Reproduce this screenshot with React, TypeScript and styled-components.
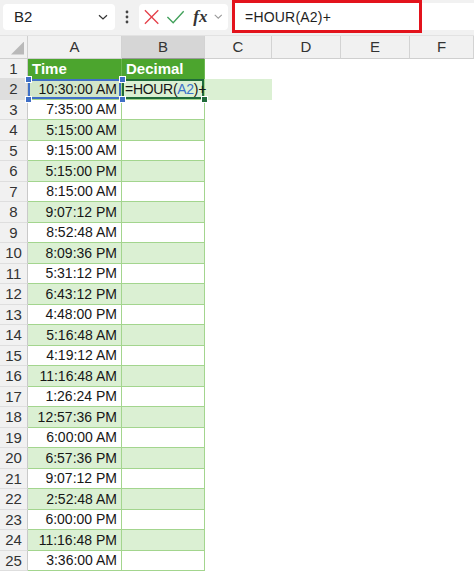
import React from 'react';
import styled, { createGlobalStyle } from 'styled-components';

const GlobalStyle = createGlobalStyle`
  html, body {
    margin: 0;
    padding: 0;
    background: #fff;
  }
  body {
    font-family: 'Liberation Sans', Arial, sans-serif;
    color: #222;
  }
`;

const times = [
  '10:30:00 AM', '7:35:00 AM', '5:15:00 AM', '9:15:00 AM', '5:15:00 PM',
  '8:15:00 AM', '9:07:12 PM', '8:52:48 AM', '8:09:36 PM', '5:31:12 PM',
  '6:43:12 PM', '4:48:00 PM', '5:16:48 AM', '4:19:12 AM', '11:16:48 AM',
  '1:26:24 PM', '12:57:36 PM', '6:00:00 AM', '6:57:36 PM', '9:07:12 PM',
  '2:52:48 AM', '6:00:00 PM', '11:16:48 PM', '3:36:00 AM',
];

const columns = ['A', 'B', 'C', 'D', 'E', 'F'];

const GREEN = '#4ca52e';
const BAND = '#dbf0d3';
const LINE = '#a3d58e';

const Page = styled.div`
  width: 474px;
  height: 572px;
  overflow: hidden;
  background: #fff;
`;

const FormulaBar = styled.div`
  display: flex;
  align-items: center;
  height: 36px;
  padding: 0 0 2px 3px;
  box-sizing: border-box;
  background: #f1f1f1;
  border-bottom: 1px solid #e2e2e2;
`;

const NameBox = styled.div`
  width: 112px;
  height: 26px;
  box-sizing: border-box;
  display: flex;
  align-items: center;
  justify-content: space-between;
  padding: 0 6px 0 11px;
  background: #fff;
  border-radius: 4px;
  font-size: 15px;
  color: #222;
`;

const DotsSlot = styled.div`
  width: 24px;
  display: flex;
  justify-content: center;
`;

const ActionBox = styled.div`
  width: 89px;
  height: 26px;
  box-sizing: border-box;
  display: flex;
  align-items: center;
  gap: 6px;
  padding: 0 4px 0 4px;
  background: #fff;
  border-radius: 4px;
`;

const Fx = styled.span`
  font-family: 'Liberation Serif', 'Times New Roman', serif;
  font-style: italic;
  font-weight: bold;
  font-size: 17px;
  color: #333;
  margin-left: 2px;
`;

const FormulaField = styled.div`
  position: relative;
  flex: 1;
  height: 27px;
  margin-left: 4px;
  display: flex;
  align-items: center;
  padding-left: 13px;
  background: #fff;
  font-size: 14px;
  letter-spacing: 0.2px;
  color: #1e1e1e;
`;

const Highlight = styled.div`
  position: absolute;
  left: 0;
  top: -3px;
  width: 190px;
  height: 33px;
  box-sizing: border-box;
  border: 3px solid #e3131c;
`;

const Sheet = styled.div`
  display: grid;
  grid-template-columns: 28px 94px 83px 67px 69px 69px 64px;
  grid-template-rows: 22.5px;
  grid-auto-rows: 20.5px;
`;

const Corner = styled.div`
  display: flex;
  align-items: flex-end;
  justify-content: flex-end;
  padding: 0 3px 3px 0;
  background: #f1f1f1;
  border-right: 1px solid #cfcfcf;
  border-bottom: 1px solid #cfcfcf;
`;

const Triangle = styled.div`
  width: 13px;
  height: 13px;
  background: #b9b9b9;
  clip-path: polygon(100% 0, 100% 100%, 0 100%);
`;

const ColHeader = styled.div<{ $selected?: boolean }>`
  display: flex;
  align-items: center;
  justify-content: center;
  font-size: 15px;
  color: #333;
  background: ${(p) => (p.$selected ? '#d6d6d6' : '#f1f1f1')};
  border-right: 1px solid #d3d3d3;
  border-bottom: 1px solid ${(p) => (p.$selected ? '#9c9c9c' : '#cfcfcf')};
`;

const RowHeader = styled.div<{ $selected?: boolean }>`
  display: flex;
  align-items: center;
  justify-content: center;
  font-size: 15px;
  color: #333;
  background: ${(p) => (p.$selected ? '#dedede' : '#f1f1f1')};
  border-right: 1px solid #c9c9c9;
  border-bottom: 1px solid #dedede;
`;

const HeadCell = styled.div`
  display: flex;
  align-items: center;
  padding-left: 4px;
  background: ${GREEN};
  color: #fff;
  font-weight: bold;
  font-size: 15px;
  border-right: 1px solid #6cb851;
`;

const Cell = styled.div<{ $shade?: boolean; $align?: 'left' | 'right' }>`
  position: relative;
  display: flex;
  align-items: center;
  justify-content: ${(p) => (p.$align === 'right' ? 'flex-end' : 'flex-start')};
  padding: 0 4px;
  font-size: 14px;
  color: #161616;
  white-space: nowrap;
  background: ${(p) => (p.$shade ? BAND : '#fff')};
  border-right: 1px solid ${LINE};
  border-bottom: 1px solid ${LINE};
`;

const RefCell = styled(Cell)`
  background: #d2e6ca;
  box-shadow: inset 0 0 0 2px #3f6fc6;
`;

const ActiveCell = styled(Cell)`
  overflow: visible;
  padding-left: 3px;
  letter-spacing: -0.3px;
  box-shadow: inset 0 0 0 2px #1f6b3a;
`;

const Blank = styled.div<{ $shade?: boolean }>`
  background: ${(p) => (p.$shade ? BAND : '#fff')};
`;

const Handle = styled.span<{ $top?: boolean; $left?: boolean; $color: string }>`
  position: absolute;
  width: 5px;
  height: 5px;
  background: ${(p) => p.$color};
  border: 1px solid #fff;
  z-index: 2;
  ${(p) => (p.$top ? 'top: -3px;' : 'bottom: -4px;')}
  ${(p) => (p.$left ? 'left: -3px;' : 'right: -4px;')}
`;

const RefText = styled.span`
  color: #3a72c9;
`;

const Chevron = ({ size = 12, color = '#333' }: { size?: number; color?: string }) => (
  <svg width={size} height={size} viewBox="0 0 12 12">
    <path d="M2 4.2 L6 8 L10 4.2" fill="none" stroke={color} strokeWidth="1.2" />
  </svg>
);

const App: React.FC = () => {
  return (
    <Page>
      <GlobalStyle />
      <FormulaBar>
        <NameBox>
          B2
          <Chevron />
        </NameBox>
        <DotsSlot>
          <svg width="4" height="16" viewBox="0 0 4 16">
            <circle cx="2" cy="3" r="1.4" fill="#444" />
            <circle cx="2" cy="8" r="1.4" fill="#444" />
            <circle cx="2" cy="13" r="1.4" fill="#444" />
          </svg>
        </DotsSlot>
        <ActionBox>
          <svg width="18" height="18" viewBox="0 0 18 18">
            <path d="M2 2 L16 16 M16 2 L2 16" stroke="#e5404a" strokeWidth="1.4" fill="none" />
          </svg>
          <svg width="20" height="18" viewBox="0 0 20 18">
            <path d="M1.5 9 L7.5 15 L18.5 3" stroke="#41a05a" strokeWidth="1.4" fill="none" />
          </svg>
          <Fx>fx</Fx>
          <Chevron size={11} color="#9a9a9a" />
        </ActionBox>
        <FormulaField>
          =HOUR(A2)+
          <Highlight />
        </FormulaField>
      </FormulaBar>

      <Sheet>
        <Corner>
          <Triangle />
        </Corner>
        {columns.map((c) => (
          <ColHeader key={c} $selected={c === 'B'}>
            {c}
          </ColHeader>
        ))}

        <RowHeader>1</RowHeader>
        <HeadCell>Time</HeadCell>
        <HeadCell>Decimal</HeadCell>
        <Blank />
        <Blank />
        <Blank />
        <Blank />

        {times.map((t, i) => {
          const row = i + 2;
          const shade = row % 2 === 0;
          if (row === 2) {
            return (
              <React.Fragment key={row}>
                <RowHeader $selected>{row}</RowHeader>
                <RefCell $align="right">
                  {t}
                  <Handle $top $left $color="#3f6fc6" />
                  <Handle $left $color="#3f6fc6" />
                </RefCell>
                <ActiveCell $shade>
                  =HOUR(<RefText>A2</RefText>)+
                  <Handle $top $left $color="#3f6fc6" />
                  <Handle $left $color="#3f6fc6" />
                  <Handle $color="#1f6b3a" />
                </ActiveCell>
                <Blank $shade />
                <Blank />
                <Blank />
                <Blank />
              </React.Fragment>
            );
          }
          return (
            <React.Fragment key={row}>
              <RowHeader>{row}</RowHeader>
              <Cell $shade={shade} $align="right">
                {t}
              </Cell>
              <Cell $shade={shade} />
              <Blank />
              <Blank />
              <Blank />
              <Blank />
            </React.Fragment>
          );
        })}
      </Sheet>
    </Page>
  );
};

export default App;
